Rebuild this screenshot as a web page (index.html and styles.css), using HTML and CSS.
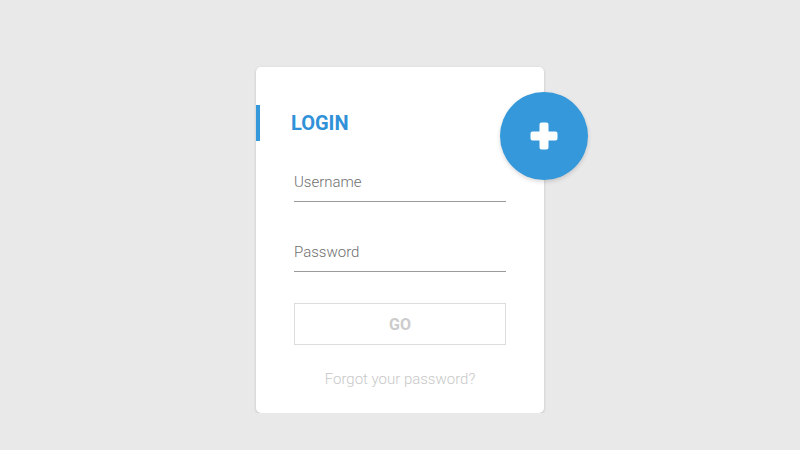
FILE: index.html
```html
<!DOCTYPE html>
<html lang="en">
<head>
  <meta charset="UTF-8">
  <title>Login</title>
  <link rel="stylesheet" href="styles.css">
</head>
<body>
  <div class="card">
    <button class="fab" aria-label="Register">
      <svg width="30" height="30" viewBox="0 0 30 30">
        <path d="M10.5 3.5 Q10.5 1.5 12.5 1.5 H17.5 Q19.5 1.5 19.5 3.5 V10.5 H26.5 Q28.5 10.5 28.5 12.5 V17.5 Q28.5 19.5 26.5 19.5 H19.5 V26.5 Q19.5 28.5 17.5 28.5 H12.5 Q10.5 28.5 10.5 26.5 V19.5 H3.5 Q1.5 19.5 1.5 17.5 V12.5 Q1.5 10.5 3.5 10.5 H10.5 Z" fill="#fff"/>
      </svg>
    </button>
    <h1 class="title">LOGIN</h1>
    <form class="form">
      <input class="field" type="text" placeholder="Username">
      <input class="field" type="password" placeholder="Password">
      <button class="go" type="button">GO</button>
    </form>
    <a class="forgot" href="#">Forgot your password?</a>
  </div>
</body>
</html>
```

FILE: styles.css
```css
body {
  margin: 0;
  background: #e9e9e9;
  font-family: Roboto, "Liberation Sans", sans-serif;
  display: flex;
  justify-content: center;
}
.card {
  position: relative;
  width: 288px;
  height: 346px;
  box-sizing: border-box;
  margin-top: 67px;
  padding: 38px 38px 0;
  background: #fff;
  border-radius: 5px;
  box-shadow: 0 1px 3px rgba(0, 0, 0, 0.18);
}
.fab {
  position: absolute;
  left: 244px;
  top: 25px;
  width: 88px;
  height: 88px;
  border: none;
  border-radius: 50%;
  background: #3498db;
  box-shadow: 0 2px 4px rgba(0, 0, 0, 0.15);
  display: flex;
  align-items: center;
  justify-content: center;
  padding: 0;
}
.title {
  margin: 0 0 24px -38px;
  height: 36px;
  line-height: 36px;
  border-left: 4px solid #3498db;
  padding-left: 31px;
  font-size: 20px;
  font-weight: 700;
  color: #3091d8;
}
.form {
  display: flex;
  flex-direction: column;
}
.field {
  height: 37px;
  box-sizing: border-box;
  border: none;
  border-bottom: 1px solid #9a9a9a;
  padding: 0 0 2px;
  margin-bottom: 33px;
  font-family: inherit;
  font-size: 15px;
  font-weight: 300;
  outline: none;
}
.field::placeholder {
  color: #6f6f6f;
}
.go {
  margin-top: -2px;
  height: 42px;
  background: #fff;
  border: 1px solid #ddd;
  font-family: inherit;
  font-size: 16px;
  font-weight: 700;
  color: #ccc;
}
.forgot {
  display: block;
  margin-top: 25px;
  text-align: center;
  font-size: 15px;
  font-weight: 300;
  color: #c8c8c8;
  text-decoration: none;
}
```
